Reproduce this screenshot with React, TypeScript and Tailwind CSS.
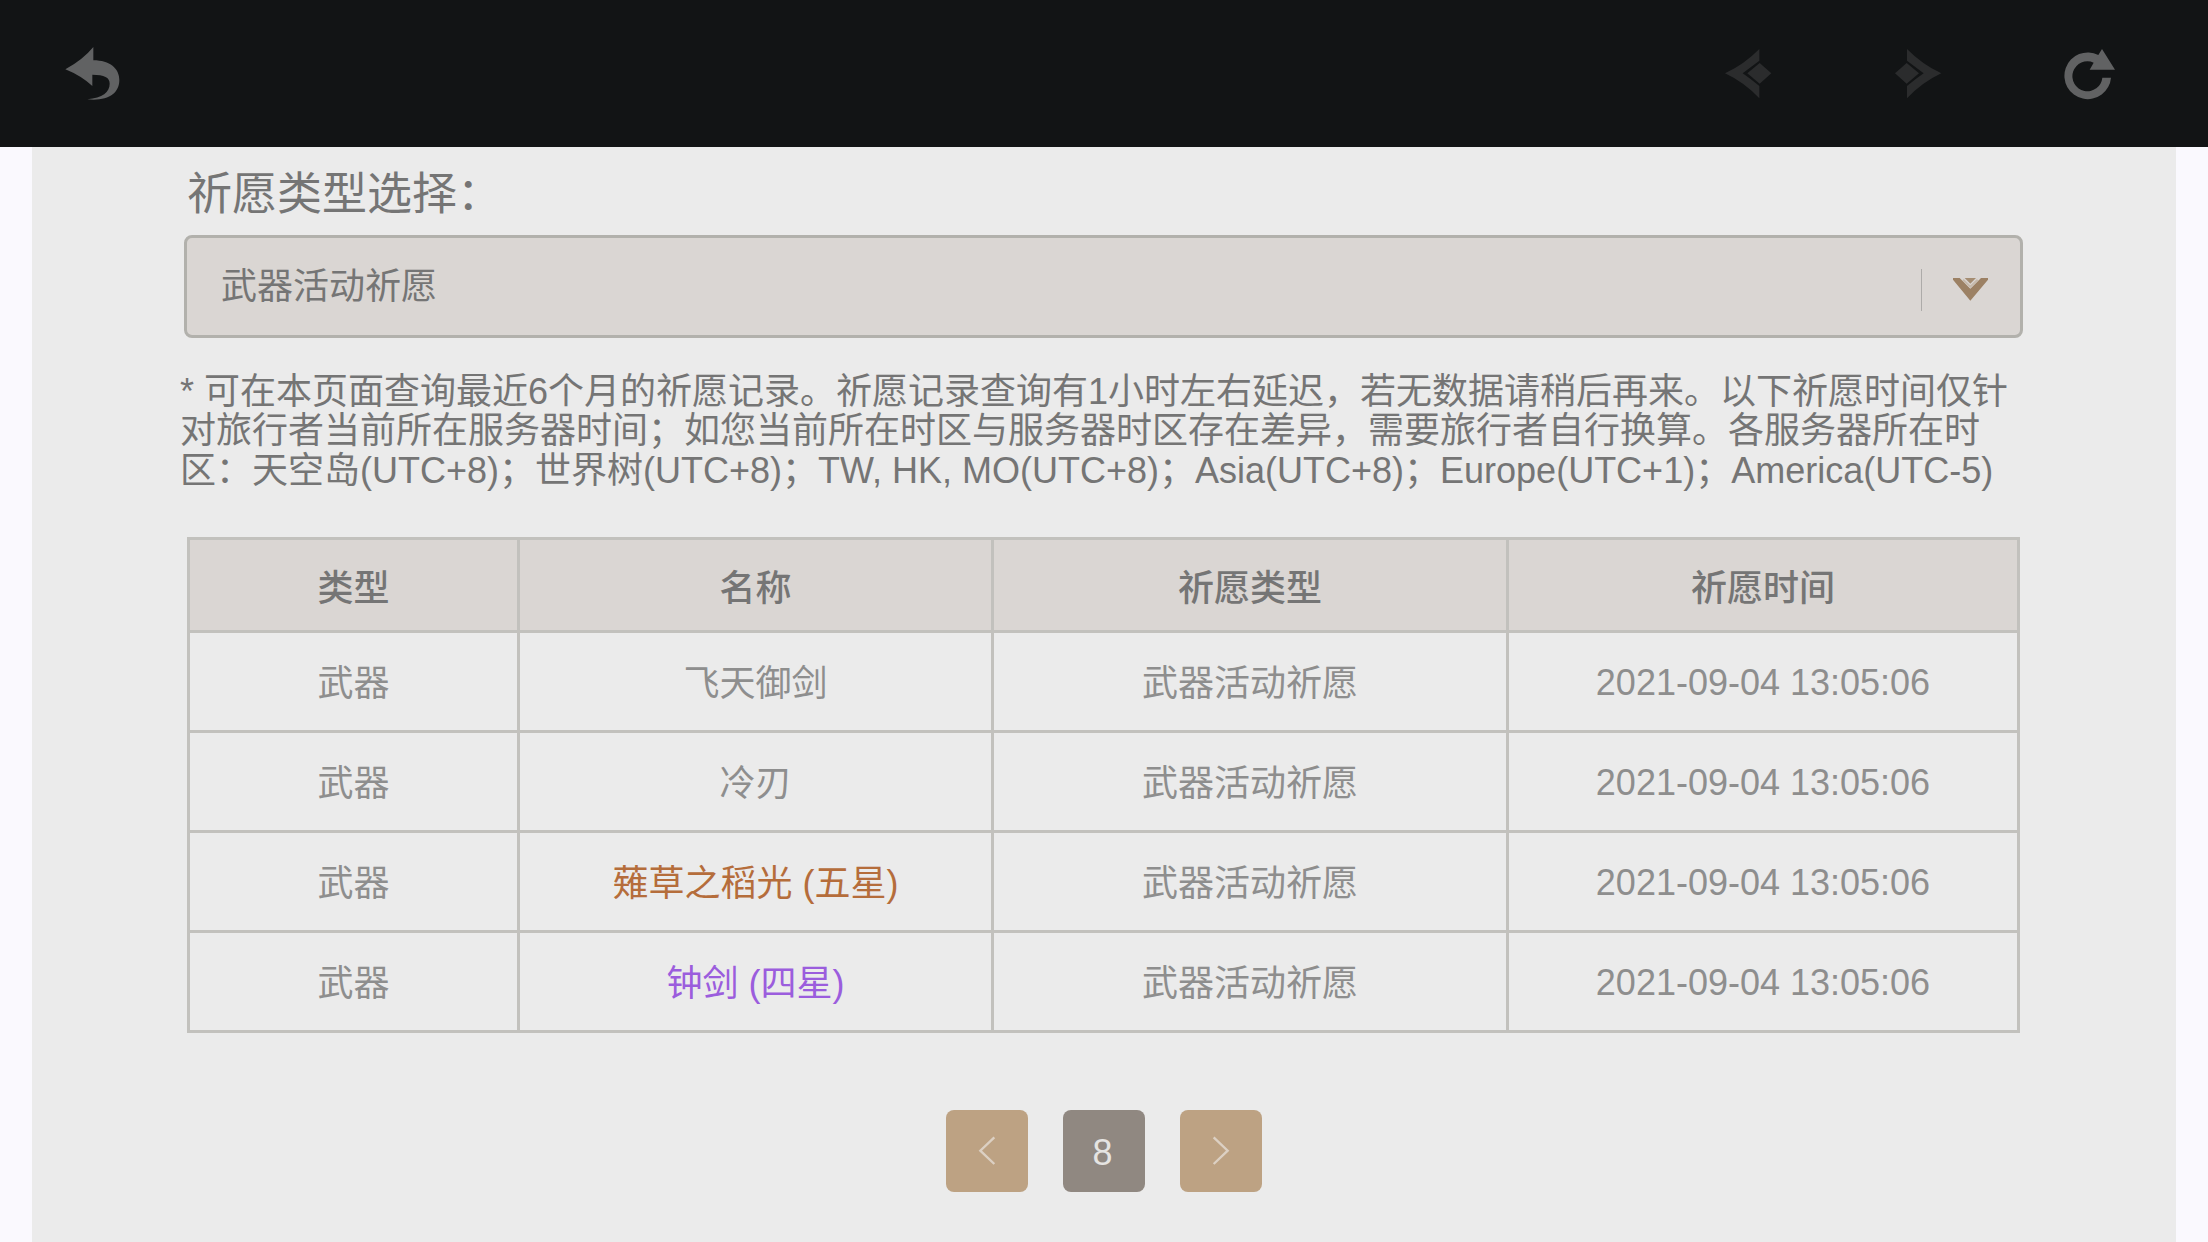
import React from "react";

const columns = ["类型", "名称", "祈愿类型", "祈愿时间"];

const records = [
  { type: "武器", name: "飞天御剑", color: "text-[#8e8e8e]", pool: "武器活动祈愿", time: "2021-09-04 13:05:06" },
  { type: "武器", name: "冷刃", color: "text-[#8e8e8e]", pool: "武器活动祈愿", time: "2021-09-04 13:05:06" },
  { type: "武器", name: "薙草之稻光 (五星)", color: "text-[#b56d3b]", pool: "武器活动祈愿", time: "2021-09-04 13:05:06" },
  { type: "武器", name: "钟剑 (四星)", color: "text-[#9b5ddd]", pool: "武器活动祈愿", time: "2021-09-04 13:05:06" },
];

const notice = [
  "* 可在本页面查询最近6个月的祈愿记录。祈愿记录查询有1小时左右延迟，若无数据请稍后再来。以下祈愿时间仅针",
  "对旅行者当前所在服务器时间；如您当前所在时区与服务器时区存在差异，需要旅行者自行换算。各服务器所在时",
  "区：天空岛(UTC+8)；世界树(UTC+8)；TW, HK, MO(UTC+8)；Asia(UTC+8)；Europe(UTC+1)；America(UTC-5)",
];

function Toolbar() {
  return (
    <header className="flex h-[147px] items-start bg-[#121415] pt-[45px] pr-[88px] pl-[60px]">
      <svg className="h-[60px] w-[60px]" viewBox="180 45 180 180" fill="#616263">
        <path d="M196 118 Q249 89 280 51 V91 C330 91 358 116 358 150 C358 190 325 214 262 208 C308 203 329 187 329 161 C329 142 313 134 277 134 V168 Q243 137 196 118 Z" />
      </svg>
      <div className="ml-auto flex gap-[115px]">
        <svg className="h-[55px] w-[55px]" viewBox="60 45 165 165" fill="#2b2c2d">
          <path d="M75 130 Q133 103 178 57 V92 Q151 112 128 130 Q151 146 178 168 V205 Q133 157 75 130 Z" />
          <path d="M142 130 L179 99 L214 130 L179 161 Z" />
        </svg>
        <svg className="h-[55px] w-[55px]" viewBox="570 45 165 165" fill="#2b2c2d">
          <path d="M724 130 Q666 103 621 57 V92 Q648 112 671 130 Q648 146 621 168 V205 Q666 157 724 130 Z" />
          <path d="M657 130 L620 99 L585 130 L620 161 Z" />
        </svg>
        <svg className="h-[60px] w-[60px]" viewBox="120 45 180 180" fill="#616263">
          <path d="M246 57 L285 119 H209 L221 98 A45 45 0 1 0 247 143 H273 A70 70 0 1 1 235 75 Z" />
        </svg>
      </div>
    </header>
  );
}

function PoolSelect() {
  return (
    <div className="ml-[152px] flex h-[103px] w-[1839px] items-center rounded-lg border-[3px] border-[#b2b1ac] bg-[#dad6d3] pl-[34px] text-[36px] leading-none text-[#757575]">
      <span className="mt-[1px]">武器活动祈愿</span>
      <span className="mt-[6px] ml-auto h-[42px] w-px bg-[#adaba9]" />
      <svg className="mt-[5px] mr-[32px] ml-[31px] h-[24px] w-[35px]" viewBox="0 0 105 72">
        <path d="M0 3 L20 3 L52 35 L84 3 L105 3 V8 L52 71 L0 8 Z" fill="#9c8164" />
        <path d="M35 3 H69 L52 20 Z" fill="#a58d72" />
        <path d="M30 8 L52 29 L74 8" stroke="#c6b9aa" strokeWidth="6" fill="none" />
      </svg>
    </div>
  );
}

function RecordTable() {
  return (
    <table className="ml-[155px] w-[1833px] table-fixed border-separate border-spacing-0 border-t-[3px] border-l-[3px] border-[#c2c1bd] text-center text-[36px] leading-[50px]">
      <colgroup>
        <col className="w-[330px]" />
        <col className="w-[474px]" />
        <col className="w-[515px]" />
        <col className="w-[511px]" />
      </colgroup>
      <thead>
        <tr className="h-[93px]">
          {columns.map((c) => (
            <th key={c} className="border-r-[3px] border-b-[3px] border-[#c2c1bd] bg-[#dad6d3] p-0 pt-[7px] font-medium text-[#757575]">
              {c}
            </th>
          ))}
        </tr>
      </thead>
      <tbody>
        {records.map((r, i) => (
          <tr key={i} className="h-[100px] text-[#8e8e8e]">
            <td className="border-r-[3px] border-b-[3px] border-[#c2c1bd] p-0 pt-[4px]">{r.type}</td>
            <td className={`border-r-[3px] border-b-[3px] border-[#c2c1bd] p-0 pt-[4px] ${r.color}`}>{r.name}</td>
            <td className="border-r-[3px] border-b-[3px] border-[#c2c1bd] p-0 pt-[4px]">{r.pool}</td>
            <td className="border-r-[3px] border-b-[3px] border-[#c2c1bd] p-0 pt-[3px]">{r.time}</td>
          </tr>
        ))}
      </tbody>
    </table>
  );
}

function Pager() {
  return (
    <nav className="mt-[77px] flex justify-center gap-[35px]">
      <button className="flex h-[82px] w-[82px] items-center justify-center rounded-lg bg-[#bda283]">
        <svg className="h-[82px] w-[82px]" viewBox="0 0 246 246" fill="none" stroke="#dcd0c3" strokeWidth="7">
          <path d="M145 82 L103 122 L145 162" />
        </svg>
      </button>
      <span className="flex h-[82px] w-[82px] items-center justify-center rounded-lg bg-[#908881] pt-[3px] pr-[3px] text-[36px] text-[#e5e4e2]">8</span>
      <button className="flex h-[82px] w-[82px] items-center justify-center rounded-lg bg-[#bda283]">
        <svg className="h-[82px] w-[82px]" viewBox="0 0 246 246" fill="none" stroke="#dcd0c3" strokeWidth="7">
          <path d="M101 82 L143 122 L101 162" />
        </svg>
      </button>
    </nav>
  );
}

export default function App() {
  return (
    <div className="flex h-[1242px] w-[2208px] flex-col overflow-hidden bg-[#faf9fe] font-['Liberation_Sans','Noto_Sans_CJK_SC',sans-serif]">
      <Toolbar />
      <main className="mx-[32px] flex-1 bg-[#ebebeb]">
        <h1 className="ml-[155px] h-[88px] pt-[22px] text-[45px] leading-[52px] text-[#757575]">祈愿类型选择：</h1>
        <PoolSelect />
        <div className="ml-[148px] h-[199px] pt-[34px] text-[36px] leading-[39.3px] whitespace-nowrap text-[#757575]">
          {notice.map((line) => (
            <p key={line}>{line}</p>
          ))}
        </div>
        <RecordTable />
        <Pager />
      </main>
    </div>
  );
}
